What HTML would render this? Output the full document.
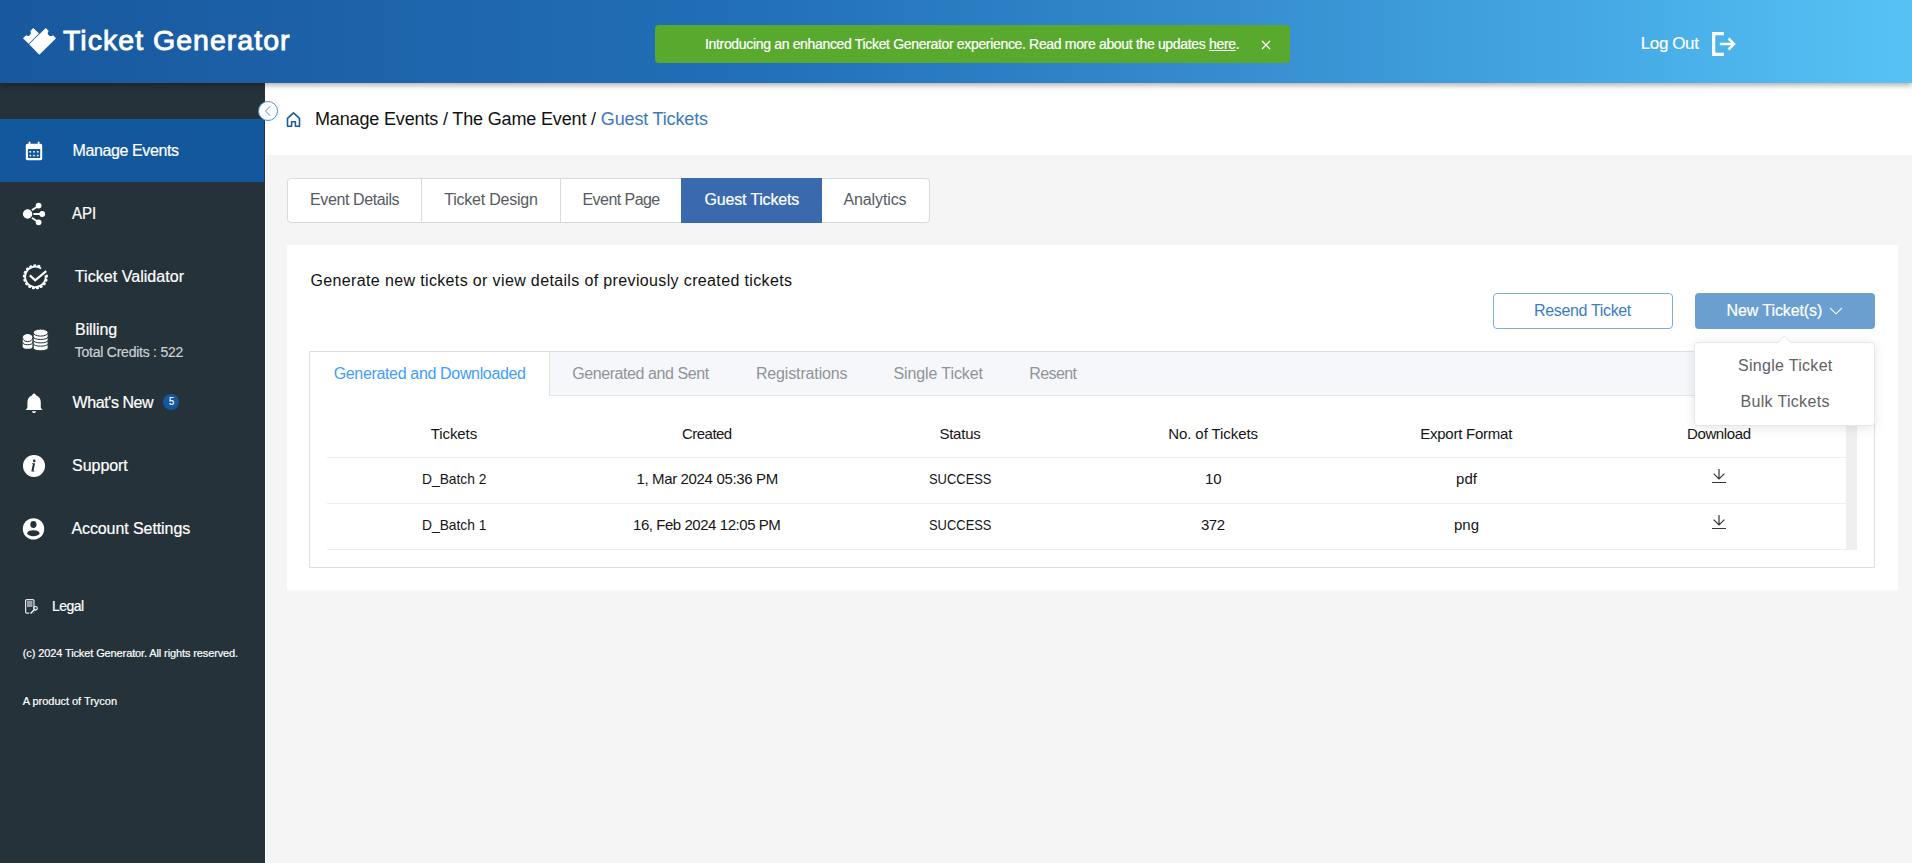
<!DOCTYPE html>
<html><head><meta charset="utf-8">
<style>
*{box-sizing:border-box;margin:0;padding:0}
html,body{width:1912px;height:863px;overflow:hidden;background:#f5f5f5;font-family:"Liberation Sans",sans-serif}
.a{position:absolute;white-space:nowrap;line-height:1}
.b{position:absolute}
#hdr{position:absolute;left:0;top:0;width:1912px;height:83px;background:linear-gradient(90deg,#18589e 0%,#2270b8 40%,#368ed0 65%,#46abe6 85%,#57c3f5 100%);box-shadow:0 2px 6px rgba(0,0,0,.35);z-index:5}
</style></head><body>
<div class="b" style="left:0;top:0;width:265px;height:863px;background:#253239"></div>
<div class="b" style="left:265px;top:155px;width:1px;height:708px;background:#fff"></div>
<div class="b" style="left:0;top:119px;width:264px;height:63px;background:#13579c"></div>
<!-- sidebar icons -->
<svg class="a" style="left:0;top:0" width="265" height="863" viewBox="0 0 265 863">
  <!-- calendar -->
  <g fill="#fff">
    <rect x="25.8" y="143.8" width="16.4" height="16.4" rx="1.6"/>
    <rect x="28.6" y="141.6" width="1.8" height="4" rx=".9"/>
    <rect x="37.7" y="141.6" width="1.8" height="4" rx=".9"/>
  </g>
  <rect x="27.9" y="149" width="12.3" height="9" fill="#13579c"/>
  <g fill="#fff">
    <rect x="29.5" y="151" width="1.6" height="1.6"/><rect x="33.2" y="151" width="1.6" height="1.6"/><rect x="36.9" y="151" width="1.6" height="1.6"/>
    <rect x="29.5" y="154.8" width="1.6" height="1.6"/><rect x="33.2" y="154.8" width="1.6" height="1.6"/><rect x="36.9" y="154.8" width="1.6" height="1.6"/>
  </g>
  <!-- api -->
  <path d="M29.5 211.8L37.5 206.5M30 214H41M29.5 216.2L37.5 221.5" stroke="#fff" stroke-width="1.9" fill="none"/>
  <circle cx="38.6" cy="205.6" r="2.9" fill="#fff"/>
  <circle cx="42.2" cy="214" r="2.9" fill="#fff"/>
  <circle cx="38.6" cy="222.3" r="2.9" fill="#fff"/>
  <circle cx="27.6" cy="214" r="5.3" fill="#fff" stroke="#253239" stroke-width="1.2"/>
  <!-- validator -->
  <g fill="none" stroke="#fff">
    <path d="M45.50 275.48 A10.2 10.2 0 1 1 41.10 268.44" stroke-width="1.8"/>
    <path d="M46.74 275.71 A11.4 11.4 0 1 1 41.44 267.23" stroke-width="2.3" stroke-dasharray="0.9 3.2" stroke-linecap="round"/>
    <path d="M29.8 275.4 L35.2 280.4 L46.2 271.2" stroke-width="2.2"/>
  </g>
  <!-- coins -->
  <path d="M22.7 337.85 A4.95 3.85 0 0 1 32.6 337.85 V346.2 A4.95 2.6 0 0 1 22.7 346.2 Z" fill="#fff"/>
  <path d="M22.7 337.85 A4.95 3.85 0 0 0 32.6 337.85 M22.7 342.1 A4.95 2.6 0 0 0 32.6 342.1" fill="none" stroke="#253239" stroke-width="1"/>
  <path d="M33.2 332.6 A7.45 3.5 0 0 1 48.1 332.6 V348.2 A7.45 2.6 0 0 1 33.2 348.2 Z" fill="#fff" stroke="#253239" stroke-width="1"/>
  <path d="M33.2 332.6 A7.45 3.5 0 0 0 48.1 332.6 M33.2 336.9 A7.45 2.6 0 0 0 48.1 336.9 M33.2 340.3 A7.45 2.6 0 0 0 48.1 340.3 M33.2 343.6 A7.45 2.6 0 0 0 48.1 343.6" fill="none" stroke="#253239" stroke-width="1"/>
  <!-- bell -->
  <path fill="#fff" d="M34 393.6c1.2 0 1.8.8 1.8 1.6 3 .9 5 3.4 5 7v5.5l1.6 2.4H25.6l1.8-2.4v-5.5c0-3.6 2-6.1 5-7 0-.8.6-1.6 1.6-1.6zM32 411.3h4c0 1-.9 1.8-2 1.8s-2-.8-2-1.8z"/>
  <!-- info -->
  <circle cx="34" cy="465.9" r="11" fill="#fff"/>
  <circle cx="34.2" cy="460.9" r="1.3" fill="#253239"/>
  <path d="M32.3 463.2h2.8l-1.6 7.6h1.2l-.2.8h-3.2l1.6-7.6h-.8z" fill="#253239"/>
  <!-- account -->
  <circle cx="33.5" cy="528.9" r="10.7" fill="#fff"/>
  <ellipse cx="33.4" cy="524.5" rx="3.1" ry="3.4" fill="#253239"/>
  <ellipse cx="33.4" cy="533.2" rx="6.1" ry="3" fill="#253239"/>
  <!-- legal -->
  <rect x="25.6" y="599.6" width="8.4" height="13.6" rx="1.2" fill="none" stroke="#e6e6e6" stroke-width="1.2"/>
  <rect x="27" y="601" width="5.5" height="6" fill="#9aa0a6"/>
  <path d="M30 614.5 L36 608.5" stroke="#253239" stroke-width="3.5"/>
  <path d="M31 613 L34.8 609.2" stroke="#fff" stroke-width="1.4" stroke-linecap="round"/>
  <circle cx="35.5" cy="608.3" r="1.8" fill="none" stroke="#fff" stroke-width="1.1"/>
</svg>
<div class="a" style="left:72.50px;top:143.26px;font-size:16px;color:#fff;letter-spacing:-0.390px;-webkit-text-stroke:0.2px currentColor;">Manage Events</div>
<div class="a" style="left:71.90px;top:206.26px;font-size:16px;color:#fff;transform:scaleX(0.9422);transform-origin:0.00px 0;-webkit-text-stroke:0.2px currentColor;">API</div>
<div class="a" style="left:74.80px;top:269.26px;font-size:16px;color:#fff;letter-spacing:0.048px;-webkit-text-stroke:0.2px currentColor;">Ticket Validator</div>
<div class="a" style="left:75.10px;top:322.26px;font-size:16px;color:#fff;letter-spacing:-0.115px;-webkit-text-stroke:0.2px currentColor;">Billing</div>
<div class="a" style="left:74.80px;top:345.15px;font-size:14px;color:#cdd0d3;letter-spacing:-0.241px;-webkit-text-stroke:0.2px currentColor;">Total Credits : 522</div>
<div class="a" style="left:72.60px;top:395.26px;font-size:16px;color:#fff;letter-spacing:-0.422px;-webkit-text-stroke:0.2px currentColor;">What's New</div>
<div class="b" style="left:163px;top:394px;width:16px;height:16px;border-radius:50%;background:#13579c"></div>
<div class="a" style="left:168.70px;top:397.44px;font-size:10px;color:#fff;transform:scaleX(0.9353);transform-origin:0.00px 0;-webkit-text-stroke:0.2px currentColor;">5</div>
<div class="a" style="left:72.10px;top:458.26px;font-size:16px;color:#fff;letter-spacing:-0.055px;-webkit-text-stroke:0.2px currentColor;">Support</div>
<div class="a" style="left:71.40px;top:521.26px;font-size:16px;color:#fff;letter-spacing:-0.084px;-webkit-text-stroke:0.2px currentColor;">Account Settings</div>
<div class="a" style="left:52.10px;top:599.15px;font-size:14px;color:#fff;letter-spacing:-0.565px;-webkit-text-stroke:0.2px currentColor;">Legal</div>
<div class="a" style="left:22.80px;top:647.69px;font-size:11px;color:#fff;letter-spacing:-0.116px;-webkit-text-stroke:0.2px currentColor;">(c) 2024 Ticket Generator. All rights reserved.</div>
<div class="a" style="left:22.80px;top:695.89px;font-size:11px;color:#fff;letter-spacing:-0.032px;-webkit-text-stroke:0.2px currentColor;">A product of Trycon</div>
<div class="b" style="left:265px;top:83px;width:1647px;height:72px;background:#fff"></div>
<div class="b" style="left:258px;top:101px;width:20px;height:20px;border-radius:50%;background:#fff;border:1px solid #4f8fd3;z-index:6"></div>
<svg class="b" style="left:258px;top:101px;z-index:7" width="20" height="20" viewBox="0 0 20 20"><path d="M12.2 5.2 L7.6 10 L12.2 14.8" fill="none" stroke="#4f8fd3" stroke-width="1"/></svg>
<svg class="b" style="left:285px;top:111px" width="17" height="17" viewBox="0 0 17 17"><path d="M2.5 15.2V7.3L8.5 1.9L14.5 7.3V15.2H10.4V10.8H6.6V15.2Z" fill="none" stroke="#1e5aa0" stroke-width="1.6" stroke-linejoin="round"/></svg>
<div class="a" style="left:315.00px;top:109.56px;font-size:18px;color:#111;letter-spacing:-0.152px;">Manage Events / The Game Event / <span style="color:#3d78c0">Guest Tickets</span></div>
<div class="b" style="left:287px;top:178px;width:643px;height:45px;border:1px solid #d6dae2;border-radius:4px;background:#fff"></div>
<div class="b" style="left:421px;top:178px;width:1px;height:45px;background:#d6dae2"></div>
<div class="b" style="left:560px;top:178px;width:1px;height:45px;background:#d6dae2"></div>
<div class="b" style="left:821px;top:178px;width:1px;height:45px;background:#d6dae2"></div>
<div class="b" style="left:681px;top:178px;width:141px;height:45px;background:#3a6aad"></div>
<div class="a" style="left:310.00px;top:192.06px;font-size:16px;color:#555a62;letter-spacing:-0.389px;">Event Details</div>
<div class="a" style="left:444.20px;top:192.06px;font-size:16px;color:#555a62;letter-spacing:-0.220px;">Ticket Design</div>
<div class="a" style="left:582.50px;top:192.06px;font-size:16px;color:#555a62;letter-spacing:-0.558px;">Event Page</div>
<div class="a" style="left:704.40px;top:192.06px;font-size:16px;color:#fff;letter-spacing:-0.169px;-webkit-text-stroke:0.2px currentColor;">Guest Tickets</div>
<div class="a" style="left:843.50px;top:192.06px;font-size:16px;color:#555a62;letter-spacing:-0.127px;">Analytics</div>
<div class="b" style="left:287px;top:245px;width:1611px;height:345px;background:#fff"></div>
<div class="a" style="left:310.50px;top:273.16px;font-size:16px;color:#111;letter-spacing:0.362px;">Generate new tickets or view details of previously created tickets</div>
<div class="b" style="left:1493px;top:293px;width:180px;height:36px;border:1px solid #80acdd;border-radius:4px;background:#fff"></div>
<div class="a" style="left:1534.00px;top:303.26px;font-size:16px;color:#3a7bc4;letter-spacing:-0.340px;">Resend Ticket</div>
<div class="b" style="left:1695px;top:293px;width:180px;height:36px;border-radius:4px;background:#6a9fd0"></div>
<div class="a" style="left:1726.60px;top:303.26px;font-size:16px;color:#fff;letter-spacing:-0.100px;-webkit-text-stroke:0.2px currentColor;">New Ticket(s)</div>
<svg class="b" style="left:1829px;top:306px" width="14" height="10" viewBox="0 0 14 10"><path d="M1.2 2.2L7 7.8L12.8 2.2" fill="none" stroke="#fff" stroke-width="1.1"/></svg>
<div class="b" style="left:309px;top:351px;width:1566px;height:217px;border:1px solid #dcdfe6;background:#fff"></div>
<div class="b" style="left:310px;top:352px;width:1564px;height:44px;background:#f5f7fa;border-bottom:1px solid #e4e7ed"></div>
<div class="b" style="left:310px;top:352px;width:240px;height:44px;background:#fff;border-right:1px solid #dcdfe6"></div>
<div class="a" style="left:333.70px;top:365.66px;font-size:16px;color:#409eff;letter-spacing:-0.341px;">Generated and Downloaded</div>
<div class="a" style="left:572.20px;top:365.66px;font-size:16px;color:#909399;letter-spacing:-0.412px;">Generated and Sent</div>
<div class="a" style="left:755.90px;top:365.66px;font-size:16px;color:#909399;letter-spacing:-0.140px;">Registrations</div>
<div class="a" style="left:893.50px;top:365.66px;font-size:16px;color:#909399;letter-spacing:-0.109px;">Single Ticket</div>
<div class="a" style="left:1029.20px;top:365.66px;font-size:16px;color:#909399;letter-spacing:-0.578px;">Resent</div>
<div class="b" style="left:1846px;top:411px;width:11px;height:139px;background:#efefef"></div>
<div class="b" style="left:327px;top:457px;width:1519px;height:1px;background:#ebeef5"></div>
<div class="b" style="left:327px;top:503px;width:1519px;height:1px;background:#ebeef5"></div>
<div class="b" style="left:327px;top:549px;width:1519px;height:1px;background:#ebeef5"></div>
<div class="a" style="left:430.80px;top:425.90px;font-size:15px;color:#151515;letter-spacing:-0.092px;">Tickets</div>
<div class="a" style="left:682.00px;top:425.90px;font-size:15px;color:#151515;letter-spacing:-0.528px;">Created</div>
<div class="a" style="left:939.40px;top:425.90px;font-size:15px;color:#151515;letter-spacing:-0.225px;">Status</div>
<div class="a" style="left:1168.20px;top:425.90px;font-size:15px;color:#151515;letter-spacing:-0.082px;">No. of Tickets</div>
<div class="a" style="left:1420.20px;top:425.90px;font-size:15px;color:#151515;letter-spacing:-0.235px;">Export Format</div>
<div class="a" style="left:1687.00px;top:425.90px;font-size:15px;color:#151515;letter-spacing:-0.386px;">Download</div>
<div class="a" style="left:421.70px;top:470.70px;font-size:15px;color:#151515;transform:scaleX(0.9195);transform-origin:0.00px 0;">D_Batch 2</div>
<div class="a" style="left:636.40px;top:470.70px;font-size:15px;color:#151515;letter-spacing:-0.349px;">1, Mar 2024 05:36 PM</div>
<div class="a" style="left:929.00px;top:470.70px;font-size:15px;color:#151515;transform:scaleX(0.8618);transform-origin:0.00px 0;">SUCCESS</div>
<div class="a" style="left:1205.00px;top:470.70px;font-size:15px;color:#151515;letter-spacing:0.020px;">10</div>
<div class="a" style="left:1456.00px;top:470.70px;font-size:15px;color:#151515;letter-spacing:0.060px;">pdf</div>
<div class="a" style="left:421.70px;top:516.70px;font-size:15px;color:#151515;transform:scaleX(0.9195);transform-origin:0.00px 0;">D_Batch 1</div>
<div class="a" style="left:633.00px;top:516.70px;font-size:15px;color:#151515;letter-spacing:-0.449px;">16, Feb 2024 12:05 PM</div>
<div class="a" style="left:929.00px;top:516.70px;font-size:15px;color:#151515;transform:scaleX(0.8618);transform-origin:0.00px 0;">SUCCESS</div>
<div class="a" style="left:1201.00px;top:516.70px;font-size:15px;color:#151515;letter-spacing:-0.510px;">372</div>
<div class="a" style="left:1454.00px;top:516.70px;font-size:15px;color:#151515;letter-spacing:-0.010px;">png</div>
<svg class="b" style="left:1711px;top:468px" width="16" height="16" viewBox="0 0 16 16"><path d="M8 1V11M2.6 5.6L8 11L13.4 5.6M1 14.5H15" fill="none" stroke="#333" stroke-width="1.2"/></svg>
<svg class="b" style="left:1711px;top:514px" width="16" height="16" viewBox="0 0 16 16"><path d="M8 1V11M2.6 5.6L8 11L13.4 5.6M1 14.5H15" fill="none" stroke="#333" stroke-width="1.2"/></svg>
<div class="b" style="left:1694px;top:342px;width:181px;height:84px;background:#fff;border:1px solid #e4e7ed;border-radius:4px;box-shadow:0 2px 12px 0 rgba(0,0,0,.1)"></div>
<svg class="b" style="left:1776px;top:335px" width="18" height="9" viewBox="0 0 18 9"><path d="M1 8.5L8.5 1L16 8.5" fill="#fff" stroke="#e4e7ed" stroke-width="1"/><rect x="0" y="8" width="18" height="1.5" fill="#fff"/></svg>
<div class="a" style="left:1738.00px;top:358.26px;font-size:16px;color:#606266;letter-spacing:0.300px;">Single Ticket</div>
<div class="a" style="left:1740.50px;top:394.16px;font-size:16px;color:#606266;letter-spacing:0.322px;">Bulk Tickets</div>
<div id="hdr">
<svg class="b" style="left:0;top:0" width="70" height="70" viewBox="0 0 70 70">
<path fill="#fff" d="M22.96 38.19 L26.1 35.2 A3 3 0 0 0 30.3 31.0 L33.4 27.94 L38.9 33.46 L28.6 43.7 Z"/>
<path fill="#fff" d="M29.1 44.3 L45.8 27.9 L48.8 30.9 A3 3 0 0 0 53.0 35.2 L56.06 38.19 L39.3 54.74 Z"/>
</svg>
<div class="a" style="left:63.00px;top:26.27px;font-size:28.5px;color:#fff;letter-spacing:1.021px;-webkit-text-stroke:0.2px currentColor;-webkit-text-stroke:0.9px #fff">Ticket Generator</div>
<div class="b" style="left:655px;top:25px;width:635px;height:38px;background:#58a92e;border-radius:4px"></div>
<div class="a" style="left:705.00px;top:36.85px;font-size:14px;color:#fff;letter-spacing:-0.331px;-webkit-text-stroke:0.2px currentColor;">Introducing an enhanced Ticket Generator experience. Read more about the updates <span style="text-decoration:underline">here</span>.</div>
<svg class="b" style="left:1261px;top:40px" width="10" height="10" viewBox="0 0 10 10"><path d="M1 1L9 9M9 1L1 9" stroke="#fff" stroke-width="1.3"/></svg>
<div class="a" style="left:1640.80px;top:34.61px;font-size:17px;color:#fff;letter-spacing:-0.398px;-webkit-text-stroke:0.2px currentColor;">Log Out</div>
<svg class="b" style="left:1710px;top:30px" width="28" height="28" viewBox="0 0 28 28">
<path d="M13.8 3.6H3.7V24.4H13.8" fill="none" stroke="#fff" stroke-width="3.2"/>
<path d="M9.8 14H23.5M18.5 8.5L24 14L18.5 19.5" fill="none" stroke="#fff" stroke-width="2.6"/>
</svg>
</div>
</body></html>
